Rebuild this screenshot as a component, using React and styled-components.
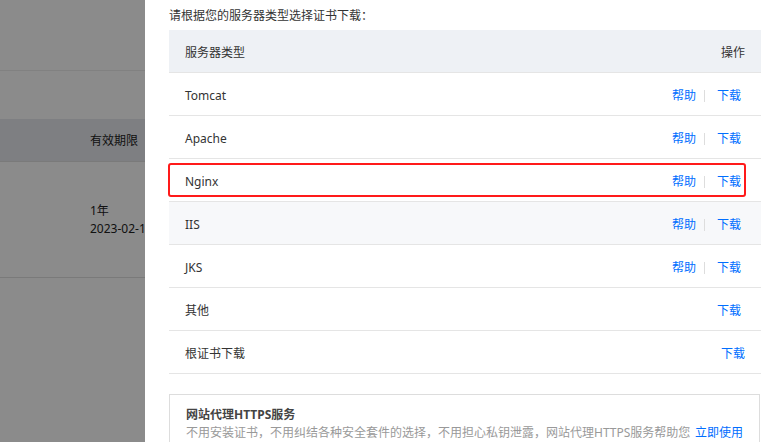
import React from 'react';
import styled, { createGlobalStyle } from 'styled-components';

const GlobalStyle = createGlobalStyle`
  html, body {
    margin: 0;
    padding: 0;
    overflow: hidden;
  }
  body {
    font-family: "Noto Sans", "Noto Sans CJK SC", sans-serif;
    font-size: 12px;
    color: #333;
  }
`;

const Page = styled.div`
  position: relative;
  width: 784px;
  height: 442px;
  overflow: hidden;
  background: #fff;
`;

/* the list page that sits under the mask, only its left strip shows */
const BackPage = styled.div`
  width: 145px;
  overflow: hidden;
`;

const BackTop = styled.div`
  height: 70px;
  border-bottom: 1px solid #ececec;
`;

const BackTable = styled.div`
  margin-top: 48px;
`;

const BackHead = styled.div`
  display: flex;
  align-items: center;
  height: 42px;
  background: #e8eaee;
  border-bottom: 1px solid #e0e0e0;
`;

const BackBody = styled.div`
  display: flex;
  align-items: center;
  height: 115px;
  border-bottom: 1px solid #e0e0e0;
`;

const BackCell = styled.div`
  padding: 1px 0 0 90px;
  font-size: 12px;
  line-height: 18px;
  color: #222;
  white-space: nowrap;
`;

const Mask = styled.div`
  position: absolute;
  inset: 0;
  background: rgba(0, 0, 0, 0.455);
`;

const Drawer = styled.div`
  position: absolute;
  top: 0;
  right: 0;
  bottom: 0;
  width: 639px;
  box-sizing: border-box;
  padding: 0 23px 0 24px;
  background: #fff;
`;

const Hint = styled.div`
  padding-top: 7px;
  margin-bottom: 5px;
  line-height: 18px;
  color: #333;
`;

const Row = styled.div`
  position: relative;
  display: flex;
  align-items: center;
  height: 43px;
  box-sizing: border-box;
  padding-top: 3px;
  border-bottom: 1px solid #e5e5e5;
  background: ${p => (p.$head ? '#eef1f5' : p.$hover ? '#f7f8fa' : '#fff')};
`;

const NameCell = styled.div`
  flex: 1;
  padding-left: 16px;
  line-height: 18px;
  color: #333;
`;

const ActionCell = styled.div`
  display: flex;
  align-items: center;
  padding-right: ${p => p.$pad}px;
  line-height: 18px;
`;

const LinkText = styled.a`
  color: #006eff;
  text-decoration: none;
  cursor: pointer;
`;

const Divider = styled.span`
  width: 1px;
  height: 12px;
  margin: 0 12px 0 8px;
  background: #ddd;
`;

const Highlight = styled.div`
  position: absolute;
  top: 4px;
  bottom: 4px;
  left: -1px;
  right: 15px;
  border: 2px solid #ff1a1a;
  border-radius: 3px;
  pointer-events: none;
`;

const Promo = styled.div`
  margin-top: 20px;
  margin-right: 1px;
  padding: 11px 16px 12px;
  border: 1px solid #ddd;
`;

const PromoTitle = styled.div`
  font-weight: bold;
  line-height: 18px;
  color: #444;
`;

const PromoText = styled.div`
  display: flex;
  justify-content: space-between;
  line-height: 18px;
  color: #999;
  white-space: nowrap;
`;

const servers = [
  { name: 'Tomcat', help: true },
  { name: 'Apache', help: true },
  { name: 'Nginx', help: true, marked: true },
  { name: 'IIS', help: true, hover: true },
  { name: 'JKS', help: true },
  { name: '其他', help: false },
  { name: '根证书下载', help: false, pad: 16 },
];

export default function App() {
  return (
    <Page>
      <GlobalStyle />
      <BackPage>
        <BackTop />
        <BackTable>
          <BackHead>
            <BackCell>有效期限</BackCell>
          </BackHead>
          <BackBody>
            <BackCell>
              1年
              <br />
              2023-02-11
            </BackCell>
          </BackBody>
        </BackTable>
      </BackPage>
      <Mask />
      <Drawer>
        <Hint>请根据您的服务器类型选择证书下载：</Hint>
        <Row $head>
          <NameCell>服务器类型</NameCell>
          <ActionCell $pad={16}>操作</ActionCell>
        </Row>
        {servers.map(s => (
          <Row key={s.name} $hover={s.hover}>
            <NameCell>{s.name}</NameCell>
            <ActionCell $pad={s.pad || 20}>
              {s.help && (
                <>
                  <LinkText>帮助</LinkText>
                  <Divider />
                </>
              )}
              <LinkText>下载</LinkText>
            </ActionCell>
            {s.marked && <Highlight />}
          </Row>
        ))}
        <Promo>
          <PromoTitle>网站代理HTTPS服务</PromoTitle>
          <PromoText>
            <span>不用安装证书，不用纠结各种安全套件的选择，不用担心私钥泄露，网站代理HTTPS服务帮助您</span>
            <LinkText>立即使用</LinkText>
          </PromoText>
        </Promo>
      </Drawer>
    </Page>
  );
}
